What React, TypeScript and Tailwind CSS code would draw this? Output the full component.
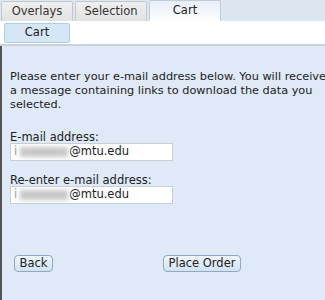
import React from "react";

const font = { fontFamily: '"DejaVu Sans", Verdana, sans-serif' };

function Email() {
  return (
    <div className="h-[18px] w-[163px] bg-white border border-[#c9cfd6] flex items-center pl-[3px] text-[11.5px] text-[#222]">
      <span className="text-[#999]">i</span>
      <span className="inline-block w-[48px] h-[10px] bg-[#c8c8c8] blur-[2px] ml-[3px] mr-[1px]"></span>
      <span>@mtu.edu</span>
    </div>
  );
}

export default function App() {
  return (
    <div className="w-[325px] h-[300px] overflow-hidden bg-[#dfe9f7] flex flex-col" style={font}>
      <div className="h-[21px] bg-[#dde7f2] flex items-end pl-[1px] gap-[2px] shrink-0">
        <div className="w-[72px] h-[20px] border border-b-0 border-[#c4c8cc] rounded-t-[2px] bg-gradient-to-b from-[#f0f0f0] to-[#e2e2e2] text-[11.5px] text-[#333] flex items-center justify-center">Overlays</div>
        <div className="w-[72px] h-[20px] border border-b-0 border-[#c4c8cc] rounded-t-[2px] bg-gradient-to-b from-[#f0f0f0] to-[#e2e2e2] text-[11.5px] text-[#333] flex items-center justify-center">Selection</div>
        <div className="w-[72px] h-[21px] border border-b-0 border-[#c4ccd4] rounded-t-[2px] bg-gradient-to-b from-[#e6eef8] to-white text-[11.5px] text-[#222] flex items-center justify-center">Cart</div>
      </div>
      <div className="h-[25px] bg-white border-b-2 border-[#cbd1d8] flex items-start pt-[2px] pl-[4px] shrink-0">
        <div className="w-[66px] h-[20px] bg-[#d5e7f7] border border-[#b3cbe0] rounded-[2px] text-[11.5px] text-[#222] flex items-center justify-center">Cart</div>
      </div>
      <div className="flex-1 border-l-2 border-[#555] flex flex-col pl-[8px]">
        <div className="w-[322px] shrink-0 text-[11.3px] leading-[14px] text-[#222] mt-[24px]">
          Please enter your e-mail address below. You will receive a message containing links to download the data you selected.
        </div>
        <div className="mt-[19px] text-[11.5px] leading-[12px] text-[#222]">E-mail address:</div>
        <div><Email /></div>
        <div className="mt-[13px] text-[11.5px] leading-[12px] text-[#222]">Re-enter e-mail address:</div>
        <div><Email /></div>
        <div className="mt-[51px] flex items-center pl-[4px]">
          <button className="h-[17px] w-[39px] bg-gradient-to-b from-[#eef5fc] to-[#d2e2f2] border border-[#8fa9c2] rounded-[4px] text-[11.5px] text-[#222] flex items-center justify-center">Back</button>
          <button className="ml-[110px] h-[17px] w-[78px] bg-gradient-to-b from-[#eef5fc] to-[#d2e2f2] border border-[#8fa9c2] rounded-[4px] text-[11.5px] text-[#222] flex items-center justify-center">Place Order</button>
        </div>
      </div>
    </div>
  );
}
